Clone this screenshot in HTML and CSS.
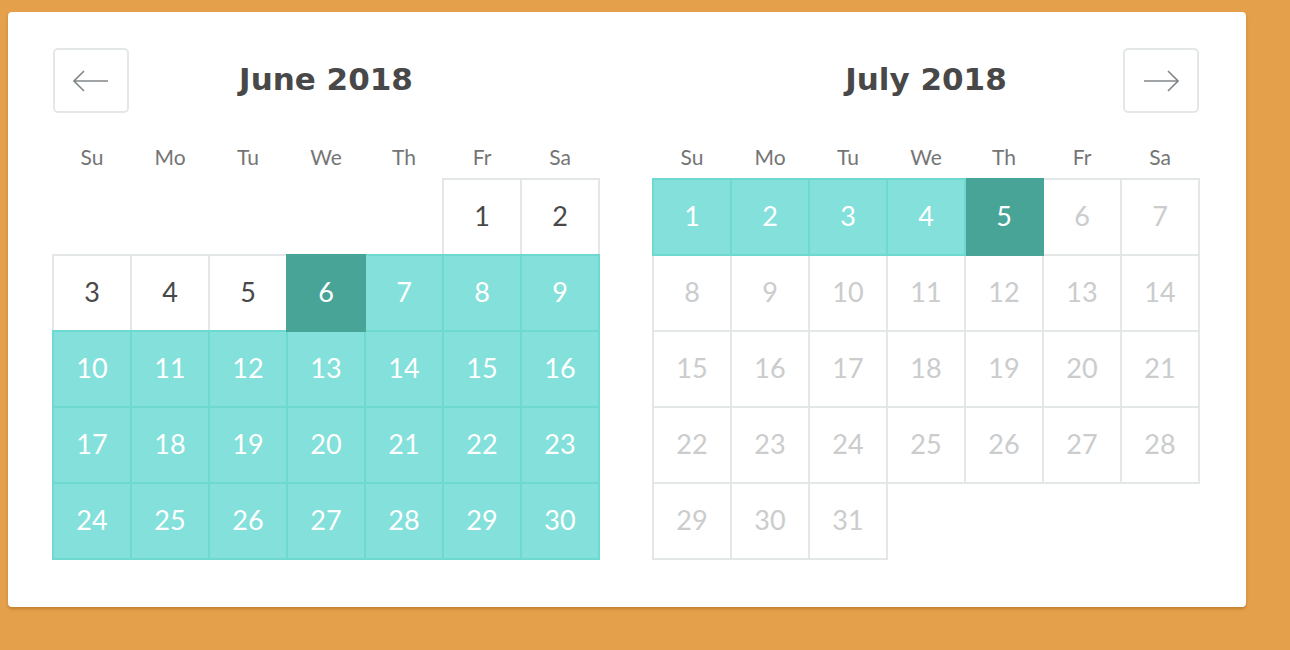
FILE: index.html
```html
<!DOCTYPE html>
<html lang="en">
  <head>
    <meta charset="utf-8" />
    <title>Pick dates</title>
    <link rel="stylesheet" href="styles.css">
  </head>
  <body>
    <div class="picker">
      <!-- June -->
      <div class="month">
        <div class="month-header">
          <button class="nav-btn" type="button" aria-label="Previous month">
            <svg width="36" height="22" viewBox="0 0 36 22">
              <path d="M35 11H2M11 1L1 11l10 10" fill="none" stroke="#82888a" stroke-width="1.6" />
            </svg>
          </button>
          <div class="month-title">June 2018</div>
          <span></span>
        </div>
        <div class="weekdays">
          <span>Su</span><span>Mo</span><span>Tu</span><span>We</span><span>Th</span><span>Fr</span><span>Sa</span>
        </div>
        <table class="days">
          <tr>
            <td class="empty"></td><td class="empty"></td><td class="empty"></td><td class="empty"></td><td class="empty"></td>
            <td>1</td><td>2</td>
          </tr>
          <tr>
            <td>3</td><td>4</td><td>5</td><td class="selected">6</td>
            <td class="span">7</td><td class="span">8</td><td class="span">9</td>
          </tr>
          <tr>
            <td class="span">10</td><td class="span">11</td><td class="span">12</td><td class="span">13</td><td class="span">14</td><td class="span">15</td><td class="span">16</td>
          </tr>
          <tr>
            <td class="span">17</td><td class="span">18</td><td class="span">19</td><td class="span">20</td><td class="span">21</td><td class="span">22</td><td class="span">23</td>
          </tr>
          <tr>
            <td class="span">24</td><td class="span">25</td><td class="span">26</td><td class="span">27</td><td class="span">28</td><td class="span">29</td><td class="span">30</td>
          </tr>
        </table>
      </div>

      <!-- July -->
      <div class="month">
        <div class="month-header">
          <span></span>
          <div class="month-title">July 2018</div>
          <button class="nav-btn" type="button" aria-label="Next month">
            <svg width="36" height="22" viewBox="0 0 36 22">
              <path d="M1 11h33M25 1l10 10-10 10" fill="none" stroke="#82888a" stroke-width="1.6" />
            </svg>
          </button>
        </div>
        <div class="weekdays">
          <span>Su</span><span>Mo</span><span>Tu</span><span>We</span><span>Th</span><span>Fr</span><span>Sa</span>
        </div>
        <table class="days">
          <tr>
            <td class="span">1</td><td class="span">2</td><td class="span">3</td><td class="span">4</td>
            <td class="selected">5</td><td class="blocked">6</td><td class="blocked">7</td>
          </tr>
          <tr>
            <td class="blocked">8</td><td class="blocked">9</td><td class="blocked">10</td><td class="blocked">11</td><td class="blocked">12</td><td class="blocked">13</td><td class="blocked">14</td>
          </tr>
          <tr>
            <td class="blocked">15</td><td class="blocked">16</td><td class="blocked">17</td><td class="blocked">18</td><td class="blocked">19</td><td class="blocked">20</td><td class="blocked">21</td>
          </tr>
          <tr>
            <td class="blocked">22</td><td class="blocked">23</td><td class="blocked">24</td><td class="blocked">25</td><td class="blocked">26</td><td class="blocked">27</td><td class="blocked">28</td>
          </tr>
          <tr>
            <td class="blocked">29</td><td class="blocked">30</td><td class="blocked">31</td>
            <td class="empty"></td><td class="empty"></td><td class="empty"></td><td class="empty"></td>
          </tr>
        </table>
      </div>
    </div>
  </body>
</html>
```

FILE: styles.css
```css
html {
  height: 100%;
}

body {
  margin: 0;
  padding: 12px 0 0 8px;
  height: 100%;
  box-sizing: border-box;
  background: #e4a04b;
  font-family: "Lato", "Liberation Sans", sans-serif;
  color: #484848;
}

.picker {
  width: 1238px;
  box-sizing: border-box;
  display: flex;
  gap: 54px;
  padding: 36px 47px 47px 45px;
  background: #fff;
  border-radius: 4px;
  box-shadow: 0 2px 3px rgba(150, 90, 20, 0.45);
}

.month {
  width: 546px;
}

/* Header: nav button / title / spacer */

.month-header {
  display: grid;
  grid-template-columns: 76px 1fr 76px;
  align-items: center;
  height: 65px;
}

.month-title {
  text-align: center;
  font-family: "DejaVu Sans", sans-serif;
  font-size: 31px;
  font-weight: 700;
  color: #484848;
  padding-bottom: 4px;
}

.nav-btn {
  width: 76px;
  height: 65px;
  padding: 0;
  border: 2px solid #e4e7e7;
  border-radius: 5px;
  background: #fff;
  display: flex;
  align-items: center;
  justify-content: center;
}

.nav-btn svg {
  display: block;
  margin-top: 1px;
}

/* Weekday names */

.weekdays {
  display: grid;
  grid-template-columns: repeat(7, 78px);
  margin: 30px 0 7px;
  line-height: 28px;
  font-size: 21px;
  color: #757575;
  text-align: center;
}

/* Day grid */

.days {
  border-collapse: collapse;
  border-spacing: 0;
  table-layout: fixed;
  width: 548px;
  margin-left: -1px;
}

.days td {
  height: 71px;
  padding: 0 0 3px;
  border: 2px solid #e4e7e7;
  text-align: center;
  vertical-align: middle;
  font-size: 27px;
  color: #484848;
}

.days td.empty {
  border: none;
}

.days td.span {
  background: #84e0db;
  border: 2px double #6dd9d0;
  color: #fff;
}

.days td.selected {
  background: #47a497;
  border: 2px double #47a497;
  color: #fff;
}

.days td.blocked {
  color: #cacccd;
}
```
